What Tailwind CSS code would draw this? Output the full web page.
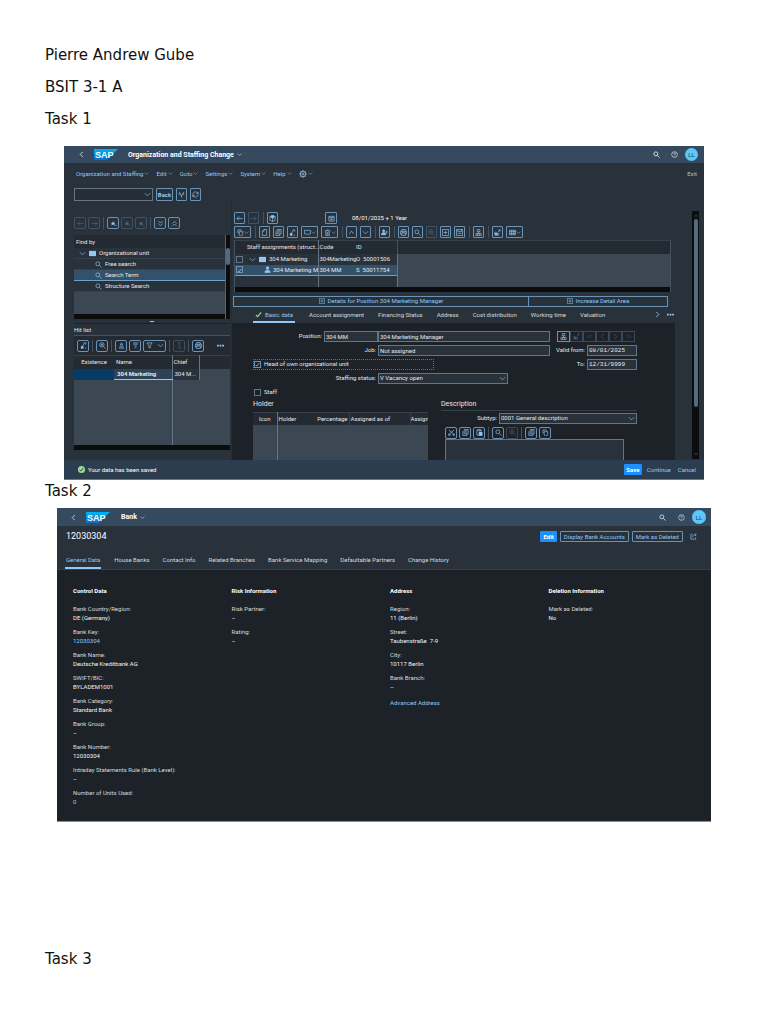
<!DOCTYPE html>
<html lang="en">
<head>
<meta charset="utf-8">
<meta name="viewport" content="width=device-width, initial-scale=1">
<title>Pierre Andrew Gube - BSIT 3-1 A</title>
<script src="https://cdn.jsdelivr.net/npm/@tailwindcss/browser@4"></script>
</head>
<body class="min-h-screen bg-white pt-[39px] pb-12 font-['DejaVu_Sans',sans-serif] text-[15px] leading-8 text-[#111]">

<svg class="absolute size-0" aria-hidden="true">
  <defs>
    <linearGradient id="sapblue" x1="0" y1="0" x2="0" y2="1"><stop offset="0" stop-color="#00b4f0"/><stop offset="1" stop-color="#0a6ed1"/></linearGradient>
    <symbol id="down" viewBox="0 0 16 16"><path d="M2 5l6 6 6-6"/></symbol>
    <symbol id="up" viewBox="0 0 16 16"><path d="M3 11l5-6 5 6"/></symbol>
    <symbol id="left" viewBox="0 0 16 16"><path d="M11 2L5 8l6 6"/></symbol>
    <symbol id="right" viewBox="0 0 16 16"><path d="M5 2l6 6-6 6"/></symbol>
    <symbol id="arrl" viewBox="0 0 16 16"><path d="M15 8H2M7 3L2 8l5 5"/></symbol>
    <symbol id="arrr" viewBox="0 0 16 16"><path d="M1 8h13M9 3l5 5-5 5"/></symbol>
    <symbol id="search" viewBox="0 0 16 16"><circle cx="6.500" cy="6.500" r="4.500"/><path d="M10 10l5 5"/></symbol>
    <symbol id="searchplus" viewBox="0 0 16 16"><circle cx="6.500" cy="6.500" r="5"/><path d="M10 10l5 5M4 6.500h5M6.500 4v5"/></symbol>
    <symbol id="help" viewBox="0 0 16 16"><circle cx="8" cy="8" r="6.500"/><path d="M6 6.500c0-3 4-3 4-.5 0 1.500-2 1.500-2 3.500M8 11v1.500"/></symbol>
    <symbol id="gear" viewBox="0 0 16 16"><circle cx="8" cy="8" r="5.500"/><circle cx="8" cy="8" r="2"/><path d="M8 0v3M8 13v3M0 8h3M13 8h3M2.500 2.500l2 2M11.500 11.500l2 2M13.500 2.500l-2 2M4.500 11.500l-2 2"/></symbol>
    <symbol id="star" viewBox="0 0 16 16"><path fill="currentColor" stroke="none" d="M7 2l1.500 4H13L9.500 8.500 11 13 7 10.500 3 13l1.500-4.500L1 6h4.500z"/><path d="M11 12h4"/></symbol>
    <symbol id="ddown" viewBox="0 0 16 16"><path d="M3 2l5 5 5-5M3 8l5 5 5-5"/></symbol>
    <symbol id="dup" viewBox="0 0 16 16"><path d="M3 8l5-5 5 5M3 14l5-5 5 5"/></symbol>
    <symbol id="plug" viewBox="0 0 16 16"><path d="M2 2l4 4M14 2l-4 4M4 5c0 6 8 6 8 0M8 9v6M1 6l3 3M15 6l-3 3"/></symbol>
    <symbol id="refresh" viewBox="0 0 16 16"><path d="M2 9a6 6 0 0 1 10-5.500L14 6M14 2v4h-4M14 8a6 6 0 0 1-10 4.500L2 10M2 14v-4h4"/></symbol>
    <symbol id="cube" viewBox="0 0 16 16"><path d="M2 3l6 2 6-2v9l-6 3-6-3zM8 5v10"/><path fill="currentColor" d="M5 1h6v5H5z"/></symbol>
    <symbol id="cal" viewBox="0 0 16 16"><path d="M2 3h12v11H2zM2 6h12M5 9h6M5 11h6"/></symbol>
    <symbol id="copyc" viewBox="0 0 16 16"><path d="M2 2h8v2M2 2v7h2M5 6h8v6a3 3 0 0 1-8 0z"/></symbol>
    <symbol id="doc" viewBox="0 0 16 16"><path d="M7 1h6v14H3V5zM7 1v4H3"/></symbol>
    <symbol id="copy" viewBox="0 0 16 16"><path d="M5 1h9v10H5zM2 5v10h9v-4M7 4h5M7 7h5"/></symbol>
    <symbol id="edit" viewBox="0 0 16 16"><path d="M2 14h6M11 14h3M5 11l5-8M8 2h5v4"/><path fill="currentColor" d="M3 10h4v4H3z"/></symbol>
    <symbol id="fold" viewBox="0 0 16 16"><path d="M1 3h14v8h-3M1 3v8h5M6 14l3-3 3 3"/></symbol>
    <symbol id="trash" viewBox="0 0 16 16"><path d="M2 4h12M6 2h4M4 4v11h8V4M7 7v6M9 7v6"/></symbol>
    <symbol id="person" viewBox="0 0 16 16"><circle cx="8" cy="4.500" r="3" fill="currentColor"/><path fill="currentColor" d="M2 15c0-8 12-8 12 0z"/></symbol>
    <symbol id="userplus" viewBox="0 0 16 16"><circle cx="6" cy="4" r="2.500" fill="currentColor"/><path fill="currentColor" d="M1 13c0-7 10-7 10 0z"/><path d="M10 7h5M13 4v6"/></symbol>
    <symbol id="print" viewBox="0 0 16 16"><path d="M4 5V1h8v4M4 12H1V5h14v7h-3M4 9h8v6H4z"/><path d="M3 7h10"/></symbol>
    <symbol id="plusbox" viewBox="0 0 16 16"><path d="M1 1h14v14H1zM8 4v8M4 8h8"/></symbol>
    <symbol id="save" viewBox="0 0 16 16"><path d="M1 1h14v14H1zM4 1v5h8V1M4 10h8"/></symbol>
    <symbol id="org" viewBox="0 0 16 16"><path d="M5 1h6v5H5zM8 6v4M2 10h12v5H2zM6 10v5M10 10v5"/></symbol>
    <symbol id="chart" viewBox="0 0 16 16"><path d="M2 6v8h9M5 12h6V9M8 8l6-6M10 2h4v4"/><path fill="currentColor" d="M3 9h4v4H3z"/></symbol>
    <symbol id="table" viewBox="0 0 16 16"><path d="M1 3h14v10H1zM1 6h14M1 10h14M6 3v10M11 3v10"/></symbol>
    <symbol id="sortup" viewBox="0 0 16 16"><path d="M2 14h12M3 11h10M8 2l3 5H5z"/></symbol>
    <symbol id="sortdn" viewBox="0 0 16 16"><path d="M2 2h12M3 5h10M5 9h6M6 13h4"/></symbol>
    <symbol id="filter" viewBox="0 0 16 16"><path d="M2 2h12L9.500 8v6l-3-2V8z"/></symbol>
    <symbol id="sum" viewBox="0 0 16 16"><path d="M12 2H5l4 6-4 6h7"/></symbol>
    <symbol id="cut" viewBox="0 0 16 16"><path d="M2 2l11 10M14 2L3 12"/><circle cx="3" cy="13" r="2"/><circle cx="13" cy="13" r="2"/></symbol>
    <symbol id="paste" viewBox="0 0 16 16"><path d="M5 2H2v12h4M5 1h5v3H5zM10 2h2v3"/><path fill="currentColor" d="M7 7h7v8H7z"/></symbol>
    <symbol id="first" viewBox="0 0 16 16"><path d="M7 4L3 8l4 4M13 4L9 8l4 4"/></symbol>
    <symbol id="last" viewBox="0 0 16 16"><path d="M3 4l4 4-4 4M9 4l4 4-4 4"/></symbol>
    <symbol id="share" viewBox="0 0 16 16"><path d="M6 3H2v11h11v-4M6 10c0-4 3-6 8-6M11 1l3 3-3 3"/></symbol>
    <symbol id="check" viewBox="0 0 16 16"><path stroke-width="2.500" d="M2 9l4 4 8-10"/></symbol>
    <symbol id="unit" viewBox="0 0 16 16"><path fill="currentColor" stroke="none" d="M0 2h16v12H0z"/></symbol>
    <symbol id="dots" viewBox="0 0 16 16"><path fill="currentColor" stroke="none" d="M0 6h4v4H0zM6 6h4v4H6zM12 6h4v4h-4z"/></symbol>
    <symbol id="sap" viewBox="0 0 24 11"><path fill="url(#sapblue)" stroke="none" d="M0 0h24L13 11H0z"/><text x="1" y="9" font-family="Liberation Sans, sans-serif" font-weight="700" font-size="9" fill="#fff" stroke="none">SAP</text></symbol>
  </defs>
</svg>

<header class="px-[45px]">
  <p>Pierre Andrew Gube</p>
  <p>BSIT 3-1 A</p>
  <h1>Task 1</h1>
</header>

<!-- Organization and Staffing window -->
<section aria-label="Organization and Staffing Change" class="mx-16 mt-[11px] overflow-hidden bg-[#29313a] font-['Roboto',sans-serif] text-[6px] leading-[8px] text-[#e4e8ec] [&_svg]:block [&_svg]:size-[7px] [&_svg]:shrink-0 [&_svg]:fill-none [&_svg]:stroke-current [&_svg]:stroke-[1.5] [&_button]:flex [&_button]:items-center [&_button]:justify-center">
  <div class="flex h-[17px] items-center bg-[#354a5f] pr-[6px] pl-[14px]">
    <button aria-label="Back"><svg class="stroke-2!"><use href="#left"/></svg></button>
    <div class="ml-[9px] h-[11px] w-6 [&_svg]:h-[11px]! [&_svg]:w-6!"><svg role="img" aria-label="SAP"><use href="#sap"/></svg></div>
    <button class="ml-[10px] gap-[3px] text-[7px] font-bold text-white">Organization and Staffing Change <svg class="max-w-[5px]"><use href="#down"/></svg></button>
    <button class="ml-auto" aria-label="Search"><svg class="stroke-2!"><use href="#search"/></svg></button>
    <button class="ml-[11px]" aria-label="Help"><svg><use href="#help"/></svg></button>
    <button class="ml-[7px] size-[13px] rounded-full bg-[#5cc8f8] text-[#1d3a56]">LL</button>
  </div>
  <nav class="flex h-[21px] items-center gap-[7px] pr-[7px] pl-[12px] text-[#91c8f6] [&_button]:gap-px [&_svg]:size-[5px]!">
    <button>Organization and Staffing<svg><use href="#down"/></svg></button>
    <button>Edit<svg><use href="#down"/></svg></button>
    <button>Goto<svg><use href="#down"/></svg></button>
    <button>Settings<svg><use href="#down"/></svg></button>
    <button>System<svg><use href="#down"/></svg></button>
    <button>Help<svg><use href="#down"/></svg></button>
    <button aria-label="Options"><svg class="min-h-2 min-w-2"><use href="#gear"/></svg><svg><use href="#down"/></svg></button>
    <button class="ml-auto">Exit</button>
  </nav>
  <div class="flex pt-1 pl-[10px] text-[#91c8f6] [&_button]:h-[13px] [&_button]:rounded-[1px] [&_button]:border [&_button]:border-[#6a93b8]">
    <label class="relative"><select aria-label="Command" class="block h-[13px] w-[79px] appearance-none border border-[#647585] bg-[#262d35]"><option></option></select><svg class="pointer-events-none absolute top-[3px] right-[2px]"><use href="#down"/></svg></label>
    <button class="ml-[3px] w-[17px] font-bold">Back</button>
    <button class="ml-[3px] w-[11px]" aria-label="Connect"><svg><use href="#plug"/></svg></button>
    <button class="ml-[3px] w-[11px]" aria-label="Refresh"><svg><use href="#refresh"/></svg></button>
  </div>

  <div class="grid h-[259px] grid-cols-[167px_1fr_12px] grid-rows-[minmax(0,1fr)]">
    <!-- Search and hit list -->
    <div class="flex flex-col pt-4 pr-px pl-[10px]">
      <div class="flex h-3 gap-0.5 text-[#91c8f6] [&_button]:size-3 [&_button]:rounded-[2px] [&_button]:border [&_button]:border-[#6a93b8] [&_button:disabled]:opacity-35 [&_i]:mx-px [&_i]:h-3 [&_i]:w-px [&_i]:bg-[#435261]">
        <button disabled aria-label="Previous"><svg><use href="#arrl"/></svg></button>
        <button disabled aria-label="Next"><svg><use href="#arrr"/></svg></button><i></i>
        <button aria-label="Add favourite"><svg><use href="#star"/></svg></button>
        <button disabled aria-label="Favourite"><svg><use href="#star"/></svg></button>
        <button disabled aria-label="Remove favourite"><svg><use href="#star"/></svg></button><i></i>
        <button aria-label="Expand"><svg><use href="#ddown"/></svg></button>
        <button aria-label="Collapse"><svg><use href="#dup"/></svg></button>
      </div>
      <div class="mt-[6px] flex h-[84px]">
        <div class="flex flex-1 flex-col bg-[#3b4753]">
          <h2 class="h-[13px] bg-[#232a31] pl-[2px] leading-[13px]">Find by</h2>
          <ul class="[&_li]:flex [&_li]:h-[11px] [&_li]:items-center [&_li]:gap-[3px] [&_li]:border-b [&_li]:border-[#35404b] [&_li]:bg-[#29313a] [&_svg]:text-[#91c8f6]">
            <li class="pl-[5px]"><svg><use href="#down"/></svg><svg><use href="#unit"/></svg>Organizational unit</li>
            <li class="pl-[21px]"><svg><use href="#search"/></svg>Free search</li>
            <li class="border-b-[#6fa3c8]! bg-[#34516a]! pl-[21px]"><svg><use href="#search"/></svg>Search Term</li>
            <li class="pl-[21px]"><svg><use href="#search"/></svg>Structure Search</li>
          </ul>
          <div class="mt-auto h-[5px] bg-[#0a0c0e]"></div>
        </div>
        <div class="w-[5px] border-l border-[#55626f] bg-[#0a0c0e] pt-[13px]"><div class="h-[17px] rounded-sm bg-[#536a80]"></div></div>
      </div>
      <div class="flex h-[5px] items-center justify-center border-b border-[#1d2228]"><div class="h-px w-1 bg-[#91c8f6]"></div></div>
      <h2 class="h-3 border-b border-[#435261] leading-[12px]">Hit list</h2>
      <div class="flex h-[19px] items-center gap-0.5 bg-[#232a31] pr-[6px] pl-[3px] text-[#91c8f6] [&_button]:h-3 [&_button]:w-3 [&_button]:rounded-[2px] [&_button]:border [&_button]:border-[#6a93b8] [&_button:disabled]:opacity-35 [&_i]:mx-px [&_i]:h-3 [&_i]:w-px [&_i]:bg-[#435261]">
        <button aria-label="Edit"><svg><use href="#edit"/></svg></button><i></i>
        <button aria-label="Find"><svg><use href="#searchplus"/></svg></button><i></i>
        <button aria-label="Sort ascending"><svg><use href="#sortup"/></svg></button>
        <button aria-label="Sort descending"><svg><use href="#sortdn"/></svg></button>
        <button class="w-[23px]! gap-1" aria-label="Filter"><svg><use href="#filter"/></svg><svg><use href="#down"/></svg></button><i></i>
        <button disabled aria-label="Total"><svg><use href="#sum"/></svg></button><i></i>
        <button aria-label="Print"><svg><use href="#print"/></svg></button>
        <svg class="ml-auto"><use href="#dots"/></svg>
      </div>
      <table class="w-full table-fixed border-collapse text-left [&_td]:p-0 [&_th]:p-0 [&_th]:font-normal">
        <colgroup><col class="w-10"><col class="w-[58px]"><col class="w-[27px]"><col></colgroup>
        <thead><tr class="h-[13px] border-t border-[#35404b] bg-[#232a31]"><th class="text-center!">Existence</th><th><span class="pl-[2px]">Name</span></th><th class="border-x border-[#647585]"><span class="pl-px">Chief</span></th><th></th></tr></thead>
        <tbody>
          <tr class="h-[11px]"><td class="bg-[#083a66]"></td><td class="border-b border-[#91c8f6] bg-[#2c4257] font-bold"><span class="pl-[3px]">304 Marketing</span></td><td class="border-x border-[#647585] bg-[#29313a]"><span class="pl-[2px]">304 M...</span></td><td class="bg-[#3b4753]"></td></tr>
          <tr class="h-[65px] bg-[#3b4753]"><td colspan="2"></td><td class="border-l border-[#647585]" colspan="2"></td></tr>
        </tbody>
      </table>
      <div class="h-[5px] bg-[#0a0c0e]"></div>
    </div>

    <!-- Staff assignments and details -->
    <div class="flex min-w-0 flex-col border-l border-[#242b33] pt-[11px]">
      <div class="flex h-3 items-center gap-[3px] pl-[2px] text-[#91c8f6] [&_button]:h-3 [&_button]:w-[11px] [&_button]:rounded-[1px] [&_button]:border [&_button]:border-[#6a93b8] [&_button:disabled]:opacity-35 [&_i]:ml-px [&_i]:h-3 [&_i]:w-px [&_i]:bg-[#435261]">
        <button aria-label="Back"><svg><use href="#arrl"/></svg></button>
        <button disabled aria-label="Forward"><svg><use href="#arrr"/></svg></button><i></i>
        <button aria-label="Object"><svg><use href="#cube"/></svg></button>
        <button class="ml-[44px] w-3!" aria-label="Calendar"><svg><use href="#cal"/></svg></button>
        <span class="ml-3 text-white">08/01/2025 + 1 Year</span>
      </div>
      <div class="mt-0.5 flex h-3 items-center gap-[3px] pl-[2px] text-[#91c8f6] [&_button]:h-3 [&_button]:w-[11px] [&_button]:rounded-[1px] [&_button]:border [&_button]:border-[#6a93b8] [&_button:disabled]:opacity-35 [&_i]:ml-px [&_i]:h-3 [&_i]:w-px [&_i]:bg-[#435261]">
        <button class="w-[17px]!" aria-label="Assign"><svg><use href="#copyc"/></svg><svg class="max-w-[5px]"><use href="#down"/></svg></button><i></i>
        <button aria-label="Create"><svg><use href="#doc"/></svg></button>
        <button aria-label="Copy"><svg><use href="#copy"/></svg></button>
        <button aria-label="Change"><svg><use href="#edit"/></svg></button>
        <button class="w-[17px]!" aria-label="Move"><svg><use href="#fold"/></svg><svg class="max-w-[5px]"><use href="#down"/></svg></button>
        <button class="w-[17px]!" aria-label="Delete"><svg><use href="#trash"/></svg><svg class="max-w-[5px]"><use href="#down"/></svg></button><i></i>
        <button aria-label="Up"><svg><use href="#up"/></svg></button>
        <button aria-label="Down"><svg><use href="#down"/></svg></button><i></i>
        <button aria-label="Assign person"><svg><use href="#userplus"/></svg></button><i></i>
        <button aria-label="Print"><svg><use href="#print"/></svg></button>
        <button aria-label="Find"><svg><use href="#search"/></svg></button>
        <button disabled aria-label="Find next"><svg><use href="#searchplus"/></svg></button>
        <button aria-label="Expand"><svg><use href="#plusbox"/></svg></button>
        <button aria-label="Save layout"><svg><use href="#save"/></svg></button><i></i>
        <button aria-label="Structure"><svg><use href="#org"/></svg></button><i></i>
        <button aria-label="Graphic"><svg><use href="#chart"/></svg></button>
        <button class="w-[17px]!" aria-label="Columns"><svg><use href="#table"/></svg><svg class="max-w-[5px]"><use href="#down"/></svg></button>
      </div>
      <div class="mt-0.5 mr-[21px] ml-[2px] border-x border-[#435261]">
        <table class="w-full table-fixed border-collapse text-left whitespace-nowrap [&_td]:p-0 [&_th]:p-0 [&_th]:font-normal">
          <colgroup><col class="w-3"><col class="w-[71px]"><col class="w-[37px]"><col class="w-[42px]"><col></colgroup>
          <thead><tr class="h-[13px] border-t border-[#35404b] bg-[#232a31]"><th></th><th class="border-r border-[#647585]">Staff assignments (struct...</th><th><span class="pl-px">Code</span></th><th><span class="pl-px">ID</span></th><th class="border-l border-[#435261]"></th></tr></thead>
          <tbody>
            <tr class="h-[11px]"><td><input type="checkbox" aria-label="304 Marketing" class="ml-px block size-[7px] appearance-none border border-[#647585]"></td><td class="border-r border-[#647585]"><span class="flex items-center gap-[3px] pl-[2px]"><svg class="text-[#91c8f6]"><use href="#down"/></svg><svg class="text-[#91c8f6]"><use href="#unit"/></svg>304 Marketing</span></td><td><span class="pl-px">304Marketing</span></td><td class="whitespace-pre"><span class="pl-px">O  50001506</span></td><td class="border-l border-[#647585] bg-[#3b4753]" rowspan="3"></td></tr>
            <tr class="h-[11px] border-b border-[#6fa3c8] bg-[#34516a]"><td class="relative"><input type="checkbox" checked aria-label="304 Marketing Manager" class="ml-px block size-[7px] appearance-none border border-[#6a93b8]"><svg class="pointer-events-none absolute top-[2px] left-[2px] max-w-[5px] text-[#91c8f6]"><use href="#check"/></svg></td><td class="border-r border-[#647585]"><span class="flex items-center gap-[2px] pl-[17px]"><svg class="text-[#91c8f6]"><use href="#person"/></svg>304 Marketing M</span></td><td><span class="pl-px">304 MM</span></td><td class="whitespace-pre"><span class="pl-px">S  50011754</span></td></tr>
            <tr class="h-[11px]"><td></td><td class="border-r border-[#647585]"></td><td></td><td></td></tr>
          </tbody>
        </table>
        <div class="h-[5px] bg-[#0a0c0e]"></div>
      </div>
      <div class="mt-1 mr-6 ml-px flex h-[11px] border border-[#6a93b8] text-[#91c8f6] [&_button]:gap-[3px] [&_svg]:size-[6px]!">
        <button class="flex-[296]"><svg><use href="#plusbox"/></svg>Details for Position 304 Marketing Manager</button>
        <button class="flex-[139] border-l border-[#6a93b8]"><svg><use href="#plusbox"/></svg>Increase Detail Area</button>
      </div>
      <div class="flex h-4 items-center gap-[14px] pr-[18px] pl-[21px] text-[#d5dade] [&_button]:h-4">
        <button class="gap-[3px] border-b-2 border-[#91c8f6] px-[2px] pt-[2px] text-[#91c8f6]"><svg class="text-[#97dd9b]"><use href="#check"/></svg>Basic data</button>
        <button>Account assignment</button><button>Financing Status</button><button>Address</button><button>Cost distribution</button><button>Working time</button><button>Valuation</button>
        <div class="ml-auto flex gap-[6px] text-[#91c8f6]"><svg class="stroke-2!"><use href="#right"/></svg><svg><use href="#dots"/></svg></div>
      </div>
      <div class="mr-[17px] min-h-0 flex-1 overflow-hidden bg-[#1d2228] pt-2 pl-[21px] [&_input]:min-w-0 [&_input]:border-[#647585]">
        <div class="flex gap-[7px]">
          <div class="flex w-[297px] flex-col gap-[3px] [&>div]:flex [&>div]:h-[11px] [&>div]:items-center">
            <div><label for="pos" class="w-[71px] pr-[2px] text-right">Position:</label><input id="pos" value="304 MM" class="h-[11px] w-[54px] border bg-[#29313a] px-px"><input aria-label="Position name" value="304 Marketing Manager" class="h-[11px] flex-1 border bg-[#29313a] px-px"></div>
            <div><label for="job" class="w-[125px] pr-[2px] text-right">Job:</label><input id="job" value="Not assigned" class="h-[11px] flex-1 border bg-[#29313a] px-px underline underline-offset-1"></div>
            <div class="relative w-[181px] border border-dotted border-[#647585]"><input id="head" type="checkbox" checked class="size-[7px] appearance-none border border-[#6a93b8]!"><svg class="pointer-events-none absolute top-px left-px max-w-[5px] text-[#91c8f6]"><use href="#check"/></svg><label for="head" class="ml-[3px]">Head of own organizational unit</label></div>
            <div><label for="stat" class="w-[125px] pr-[2px] text-right">Staffing status:</label><span class="relative"><select id="stat" class="block h-[11px] w-[130px] appearance-none border border-[#647585] bg-[#29313a] px-px"><option>V Vacancy open</option></select><svg class="pointer-events-none absolute top-[2px] right-[2px] text-[#91c8f6]"><use href="#down"/></svg></span></div>
            <div><input id="staff" type="checkbox" class="ml-px size-[7px] appearance-none border"><label for="staff" class="ml-[3px]">Staff</label></div>
          </div>
          <div class="flex w-20 flex-col gap-[3px] [&_input]:h-[11px] [&_input]:w-[50px] [&_input]:shrink-0 [&_input]:border [&_input]:bg-[#29313a] [&_input]:px-px [&_input]:font-['Liberation_Mono',monospace] [&>label]:flex [&>label]:h-[11px] [&>label]:items-center [&>label]:justify-end [&>label]:gap-[2px] [&>label]:whitespace-nowrap">
            <div class="grid h-[11px] w-[78px] grid-cols-6 text-[#91c8f6] [&_button]:border [&_button]:border-[#6a93b8] [&_button:disabled]:opacity-35">
              <button aria-label="Person"><svg><use href="#org"/></svg></button><button disabled aria-label="Graphic"><svg><use href="#chart"/></svg></button><button disabled aria-label="First"><svg><use href="#first"/></svg></button><button disabled aria-label="Previous"><svg><use href="#left"/></svg></button><button disabled aria-label="Next"><svg><use href="#right"/></svg></button><button disabled aria-label="Last"><svg><use href="#last"/></svg></button>
            </div>
            <label>Valid from:<input value="08/01/2025"></label>
            <label>To:<input value="12/31/9999"></label>
          </div>
        </div>
        <div class="flex gap-[13px]">
          <div class="w-[175px] shrink-0">
            <h3 class="h-[14px] text-[7px] leading-[13px]">Holder</h3>
            <table class="w-full table-fixed border-collapse text-left whitespace-nowrap [&_td]:p-0 [&_th]:overflow-hidden [&_th]:p-0 [&_th]:font-normal">
              <colgroup><col class="w-6"><col class="w-7"><col class="w-11"><col class="w-[61px]"><col></colgroup>
              <thead><tr class="h-[13px] border-t border-[#35404b] bg-[#232a31]"><th class="border-r border-[#647585] text-center!">Icon</th><th><span class="pl-px">Holder</span></th><th class="border-r border-[#35404b] text-right! pr-px!">Percentage</th><th class="border-r border-[#35404b]"><span class="pl-px">Assigned as of</span></th><th>Assign</th></tr></thead>
              <tbody><tr class="h-9 bg-[#3b4753]"><td class="border-r border-[#647585]"></td><td colspan="4"></td></tr></tbody>
            </table>
          </div>
          <div class="w-[196px]">
            <h3 class="h-[13px] border-b border-[#35404b] text-[7px] leading-[13px]">Description</h3>
            <div class="mt-0.5 flex h-[11px] items-center justify-end gap-[2px]"><label for="sub">Subtyp:</label><span class="relative"><select id="sub" class="block h-[11px] w-[138px] appearance-none border border-[#647585] bg-[#29313a] px-px"><option>0001 General description</option></select><svg class="pointer-events-none absolute top-[2px] right-[2px] text-[#91c8f6]"><use href="#down"/></svg></span></div>
            <div class="mt-[3px] ml-1 flex h-3 gap-0.5 text-[#91c8f6] [&_button]:size-3 [&_button]:rounded-[2px] [&_button]:border [&_button]:border-[#6a93b8] [&_button:disabled]:opacity-35 [&_i]:mx-px [&_i]:h-3 [&_i]:w-px [&_i]:bg-[#435261]">
              <button aria-label="Cut"><svg><use href="#cut"/></svg></button><button aria-label="Copy"><svg><use href="#copy"/></svg></button><button aria-label="Paste"><svg><use href="#paste"/></svg></button><i></i>
              <button aria-label="Find"><svg><use href="#search"/></svg></button><button disabled aria-label="Find next"><svg><use href="#searchplus"/></svg></button><i></i>
              <button aria-label="Load"><svg><use href="#copy"/></svg></button><button aria-label="Export"><svg><use href="#copyc"/></svg></button>
            </div>
            <textarea aria-label="Description text" class="ml-1 block h-8 w-[179px] resize-none border border-[#647585] bg-[#29313a]"></textarea>
          </div>
        </div>
      </div>
    </div>

    <!-- Page scrollbar -->
    <div class="mt-[10px] mr-[5px] mb-px flex flex-col items-center bg-[#0a0c0e] py-[3px] text-[#91c8f6] [&_svg]:size-1!">
      <svg><use href="#up"/></svg><div class="mt-px h-[188px] w-1 rounded-sm bg-[#536a80]"></div><svg class="mt-auto"><use href="#down"/></svg>
    </div>
  </div>
  <footer class="flex h-5 items-center border-b border-[#777] bg-[#2c3d4f] pr-2 pl-[14px] text-[#91c8f6]">
    <span class="flex size-[7px] items-center justify-center rounded-full bg-[#97dd9b] text-[#1d2228] [&_svg]:size-[5px]!"><svg><use href="#check"/></svg></span>
    <span class="ml-[3px] text-white">Your data has been saved</span>
    <button class="ml-auto h-[11px] w-[18px] rounded-[1px] bg-[#1b90ff] font-bold text-white">Save</button>
    <button class="ml-[5px]">Continue</button>
    <button class="ml-[7px]">Cancel</button>
  </footer>
</section>

<h1 class="px-[45px] leading-[23px]">Task 2</h1>

<!-- Bank details window -->
<section aria-label="Bank" class="mx-[57px] mt-[5px] border-b border-[#8a9097] bg-[#1d2228] pb-[15px] font-['Roboto',sans-serif] text-[6px] leading-[9px] text-[#d5dade] [&_svg]:block [&_svg]:size-[7px] [&_svg]:fill-none [&_svg]:stroke-current [&_svg]:stroke-[1.5] [&_button]:flex [&_button]:items-center [&_button]:justify-center">
  <div class="flex h-[18px] items-center bg-[#354a5f] pr-[5px] pl-[13px]">
    <button aria-label="Back"><svg class="stroke-2!"><use href="#left"/></svg></button>
    <div class="ml-[9px] h-[11px] w-6 [&_svg]:h-[11px]! [&_svg]:w-6!"><svg role="img" aria-label="SAP"><use href="#sap"/></svg></div>
    <button class="ml-[11px] gap-[3px] text-[7px] font-bold text-white">Bank <svg class="max-w-[5px]"><use href="#down"/></svg></button>
    <button class="ml-auto" aria-label="Search"><svg class="stroke-2!"><use href="#search"/></svg></button>
    <button class="ml-3" aria-label="Help"><svg><use href="#help"/></svg></button>
    <button class="ml-[7px] size-[14px] rounded-full bg-[#5cc8f8] text-[#1d3a56]">LL</button>
  </div>
  <div class="border-b border-[#35404b] bg-[#29313a]">
    <div class="flex items-center gap-[3px] pt-[5px] pr-[14px] pl-[9px] text-[#91c8f6] [&_button]:h-[11px] [&_button]:rounded-[1px] [&_button]:px-[3px]">
      <h2 class="mr-auto text-[9px] leading-[11px] text-white">12030304</h2>
      <button class="bg-[#1b90ff] font-bold text-white">Edit</button>
      <button class="border border-[#6a93b8]">Display Bank Accounts</button>
      <button class="border border-[#6a93b8]">Mark as Deleted</button>
      <button class="ml-1 px-0!" aria-label="Share"><svg><use href="#share"/></svg></button>
    </div>
    <nav class="mt-[9px] flex gap-[13px] px-2 [&_a]:h-[18px] [&_a]:leading-[18px]">
      <a href="#general" class="border-b-2 border-[#91c8f6] px-px text-[#91c8f6]">General Data</a><a href="#house">House Banks</a><a href="#contact">Contact Info</a><a href="#branches">Related Branches</a><a href="#mapping">Bank Service Mapping</a><a href="#partners">Defaultable Partners</a><a href="#history">Change History</a>
    </nav>
  </div>
  <div id="general" class="grid grid-cols-4 pt-4 pr-1 pl-4 [&_dd]:mb-[5px] [&_dd]:text-[#f2f4f6] [&_h3]:mb-[9px] [&_h3]:font-bold [&_h3]:text-white [&_a]:text-[#91c8f6]">
    <div><h3>Control Data</h3>
      <dl><dt>Bank Country/Region:</dt><dd>DE (Germany)</dd><dt>Bank Key:</dt><dd><a href="#key">12030304</a></dd><dt>Bank Name:</dt><dd>Deutsche Kreditbank AG</dd><dt>SWIFT/BIC:</dt><dd>BYLADEM1001</dd><dt>Bank Category:</dt><dd>Standard Bank</dd><dt>Bank Group:</dt><dd>–</dd><dt>Bank Number:</dt><dd>12030304</dd><dt>Intraday Statements Rule (Bank Level):</dt><dd>–</dd><dt>Number of Units Used:</dt><dd class="mb-0!"><a href="#units">0</a></dd></dl>
    </div>
    <div><h3>Risk Information</h3><dl><dt>Risk Partner:</dt><dd>–</dd><dt>Rating:</dt><dd>–</dd></dl></div>
    <div><h3>Address</h3><dl><dt>Region:</dt><dd>11 (Berlin)</dd><dt>Street:</dt><dd class="whitespace-pre">Taubenstraße  7-9</dd><dt>City:</dt><dd>10117 Berlin</dd><dt>Bank Branch:</dt><dd>–</dd></dl><a href="#advanced" class="mt-[7px] block">Advanced Address</a></div>
    <div><h3>Deletion Information</h3><dl><dt>Mark as Deleted:</dt><dd>No</dd></dl></div>
  </div>
</section>

<h1 class="mt-[121px] px-[45px]">Task 3</h1>
</body>
</html>
